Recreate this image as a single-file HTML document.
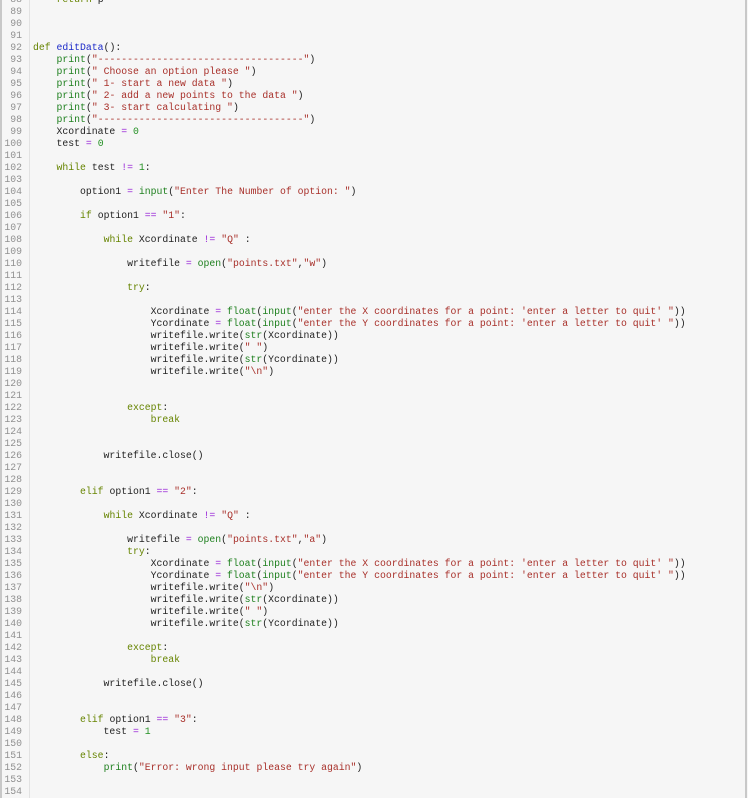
<!DOCTYPE html>
<html><head><meta charset="utf-8"><style>
html,body{margin:0;padding:0;background:#f6f6f6;width:748px;height:798px;overflow:hidden;position:relative}
.lb{position:absolute;left:0;top:0;width:2px;height:798px;background:#c8c8c8}
.rb{position:absolute;left:745px;top:0;width:2px;height:798px;background:#c8c8c8}
.sep{position:absolute;left:29px;top:0;width:1px;height:798px;background:#e2e2e2}
.g,.c{position:absolute;top:-6px;margin:0;font-family:"Liberation Mono",monospace;font-size:9.8px;line-height:12px;white-space:pre}
.g{left:0;width:22px;text-align:right;color:#909090}
.c{left:33px;color:#222}
.k{color:#668400}.b{color:#1f801f}.s{color:#a8302a}.o{color:#9a28d8}.n{color:#229022}.f{color:#1a28c8}
</style></head><body>
<div class="lb"></div><div class="rb"></div><div class="sep"></div>
<pre class="g">88
89
90
91
92
93
94
95
96
97
98
99
100
101
102
103
104
105
106
107
108
109
110
111
112
113
114
115
116
117
118
119
120
121
122
123
124
125
126
127
128
129
130
131
132
133
134
135
136
137
138
139
140
141
142
143
144
145
146
147
148
149
150
151
152
153
154</pre>
<pre class="c">    <span class="k">return</span> p



<span class="k">def</span> <span class="f">editData</span>():
    <span class="b">print</span>(<span class="s">"-----------------------------------"</span>)
    <span class="b">print</span>(<span class="s">" Choose an option please "</span>)
    <span class="b">print</span>(<span class="s">" 1- start a new data "</span>)
    <span class="b">print</span>(<span class="s">" 2- add a new points to the data "</span>)
    <span class="b">print</span>(<span class="s">" 3- start calculating "</span>)
    <span class="b">print</span>(<span class="s">"-----------------------------------"</span>)
    Xcordinate <span class="o">=</span> <span class="n">0</span>
    test <span class="o">=</span> <span class="n">0</span>

    <span class="k">while</span> test <span class="o">!=</span> <span class="n">1</span>:

        option1 <span class="o">=</span> <span class="b">input</span>(<span class="s">"Enter The Number of option: "</span>)

        <span class="k">if</span> option1 <span class="o">==</span> <span class="s">"1"</span>:

            <span class="k">while</span> Xcordinate <span class="o">!=</span> <span class="s">"Q"</span> :

                writefile <span class="o">=</span> <span class="b">open</span>(<span class="s">"points.txt"</span>,<span class="s">"w"</span>)

                <span class="k">try</span>:

                    Xcordinate <span class="o">=</span> <span class="b">float</span>(<span class="b">input</span>(<span class="s">"enter the X coordinates for a point: 'enter a letter to quit' "</span>))
                    Ycordinate <span class="o">=</span> <span class="b">float</span>(<span class="b">input</span>(<span class="s">"enter the Y coordinates for a point: 'enter a letter to quit' "</span>))
                    writefile.write(<span class="b">str</span>(Xcordinate))
                    writefile.write(<span class="s">" "</span>)
                    writefile.write(<span class="b">str</span>(Ycordinate))
                    writefile.write(<span class="s">"\n"</span>)


                <span class="k">except</span>:
                    <span class="k">break</span>


            writefile.close()


        <span class="k">elif</span> option1 <span class="o">==</span> <span class="s">"2"</span>:

            <span class="k">while</span> Xcordinate <span class="o">!=</span> <span class="s">"Q"</span> :

                writefile <span class="o">=</span> <span class="b">open</span>(<span class="s">"points.txt"</span>,<span class="s">"a"</span>)
                <span class="k">try</span>:
                    Xcordinate <span class="o">=</span> <span class="b">float</span>(<span class="b">input</span>(<span class="s">"enter the X coordinates for a point: 'enter a letter to quit' "</span>))
                    Ycordinate <span class="o">=</span> <span class="b">float</span>(<span class="b">input</span>(<span class="s">"enter the Y coordinates for a point: 'enter a letter to quit' "</span>))
                    writefile.write(<span class="s">"\n"</span>)
                    writefile.write(<span class="b">str</span>(Xcordinate))
                    writefile.write(<span class="s">" "</span>)
                    writefile.write(<span class="b">str</span>(Ycordinate))

                <span class="k">except</span>:
                    <span class="k">break</span>

            writefile.close()


        <span class="k">elif</span> option1 <span class="o">==</span> <span class="s">"3"</span>:
            test <span class="o">=</span> <span class="n">1</span>

        <span class="k">else</span>:
            <span class="b">print</span>(<span class="s">"Error: wrong input please try again"</span>)

</pre>
</body></html>
